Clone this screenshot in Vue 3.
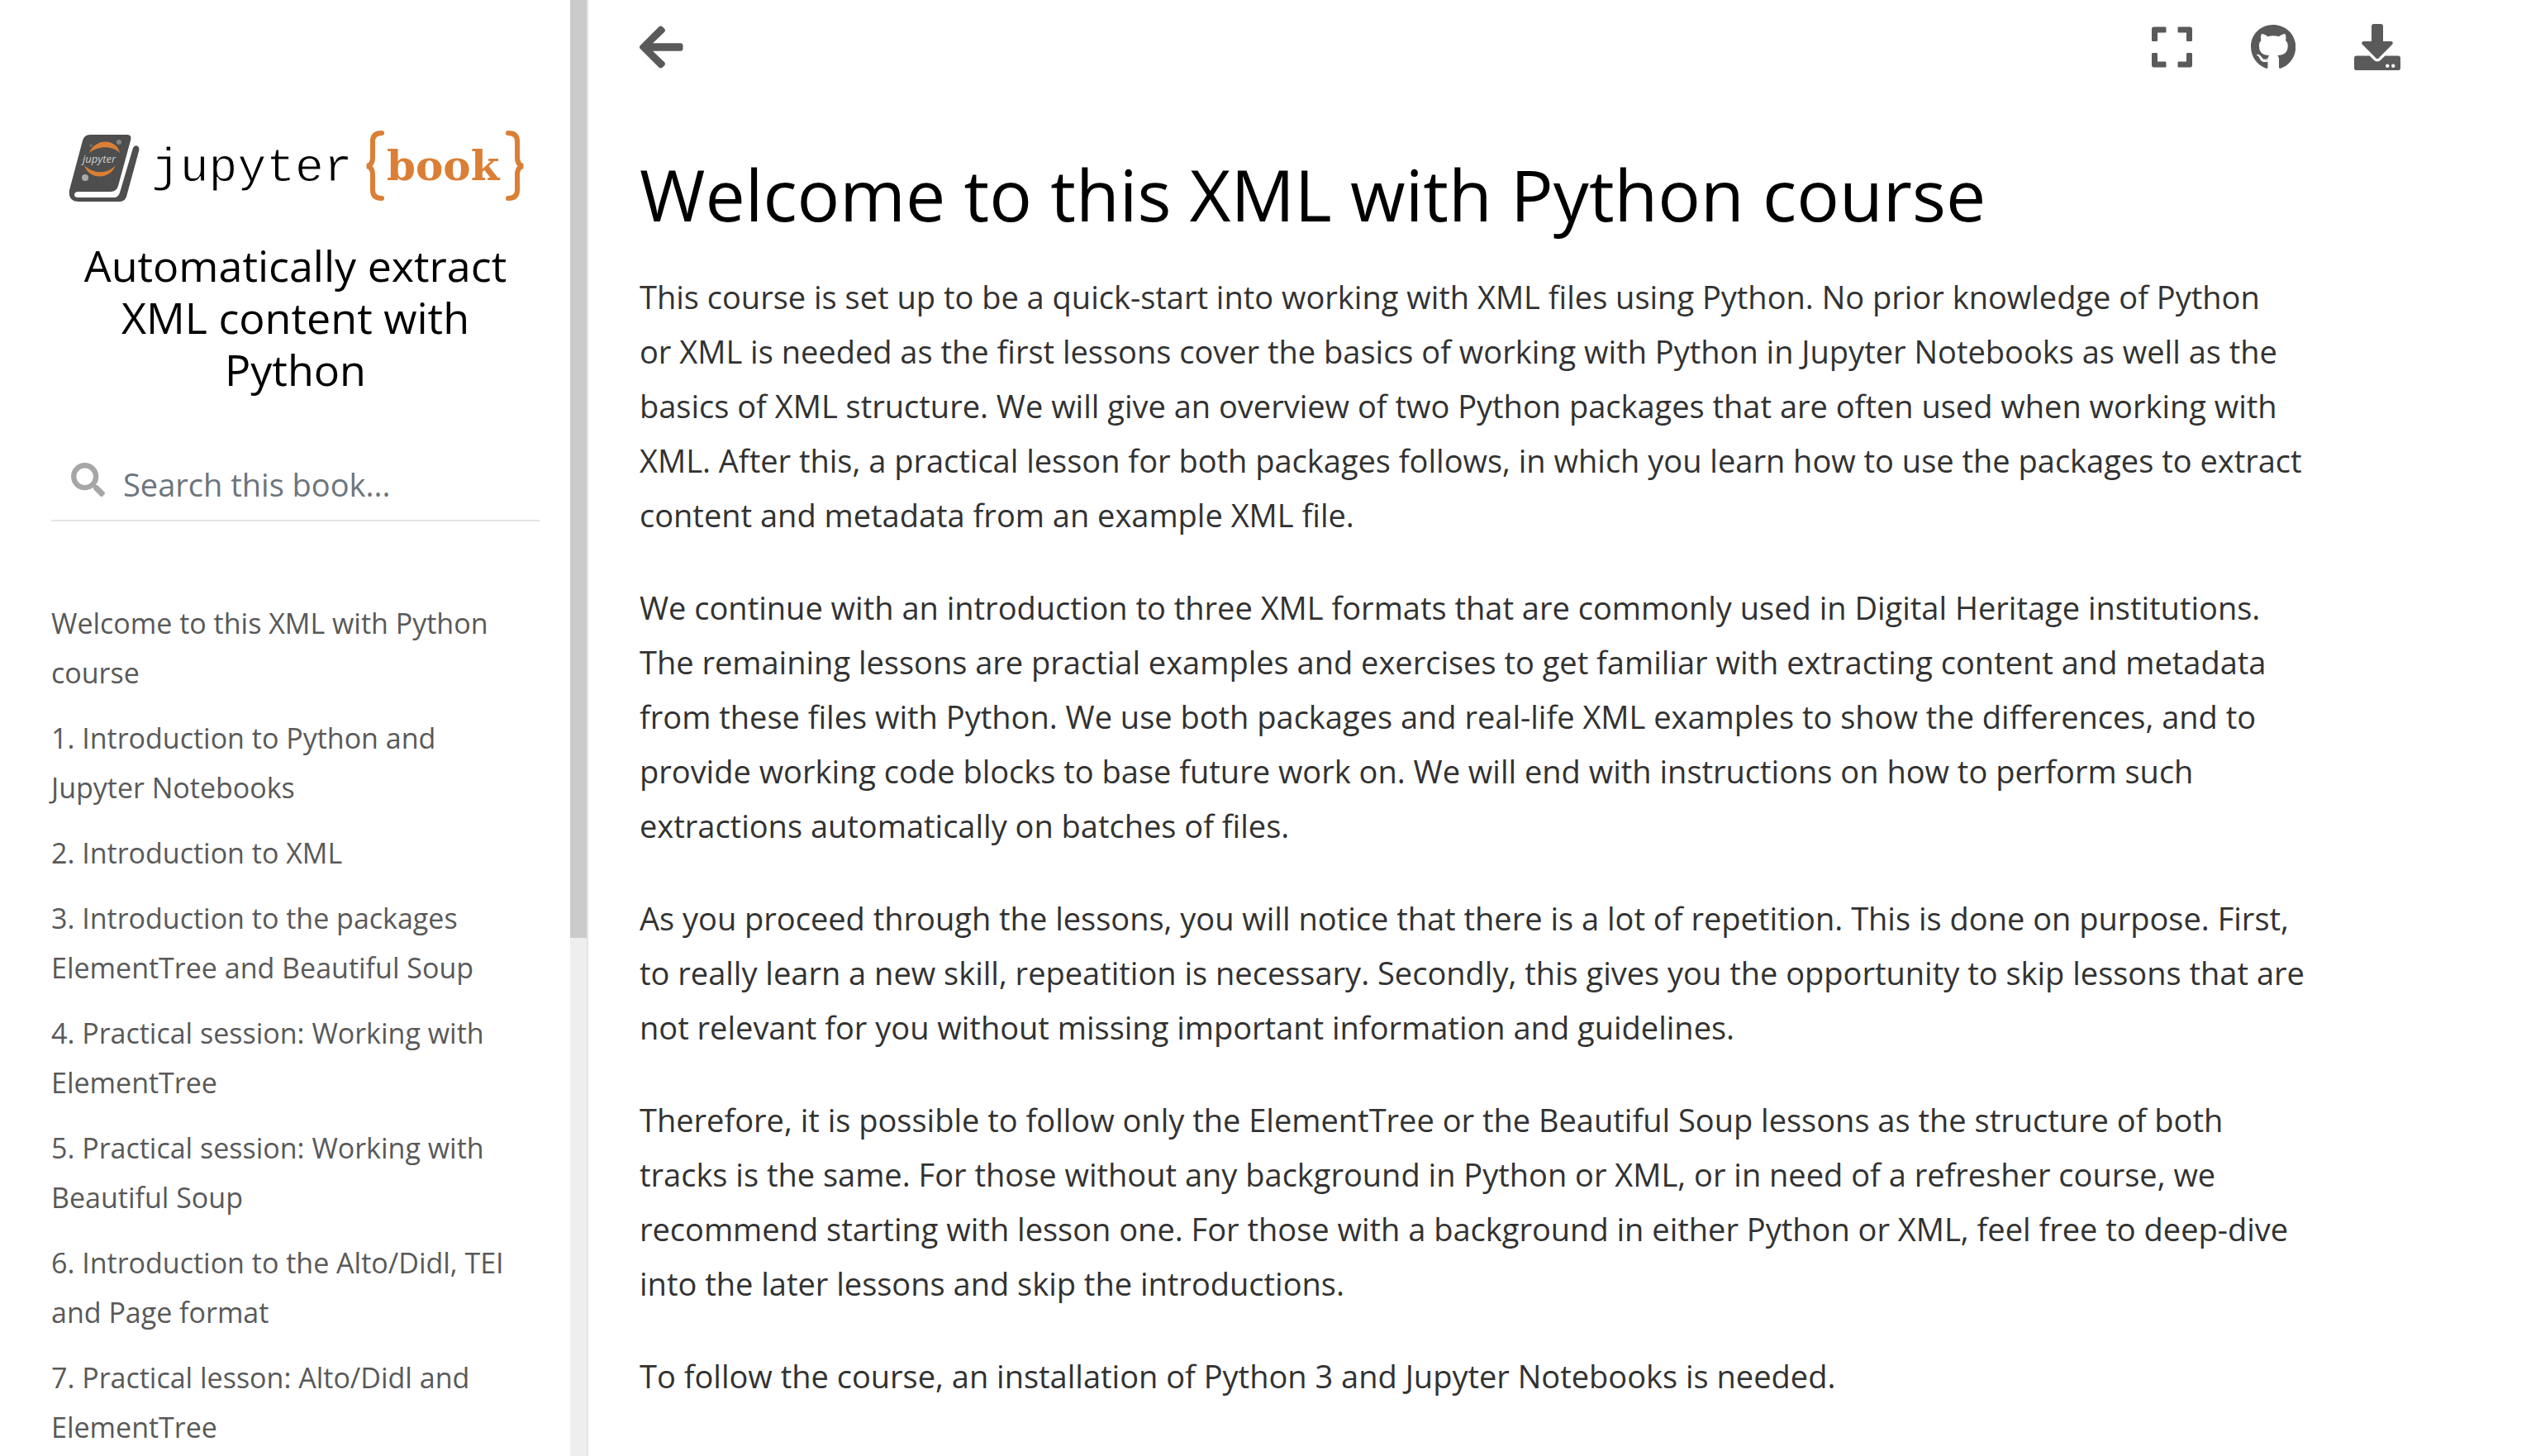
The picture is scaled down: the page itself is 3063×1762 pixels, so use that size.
<template>
  <div class="page">
    <aside class="sidebar">
      <div class="sidebar-content">
        <a class="brand" href="#">
          <svg class="logo" viewBox="0 0 554 90" role="img" aria-label="Jupyter Book">
            <path d="M27 6H72Q78 6 76 13L61 68Q59 75 52 75H13Q8 75 8 79Q8 82 13 82H56Q61 82 63 76L79 22Q81 18 85 20Q87 22 86 26L71 81Q69 87 62 87H14Q0 87 2 73L18 13Q20 6 27 6Z" fill="#4e4e4e" />
            <path d="M26 28C33 10 59 10 63 28C54 19 37 19 26 28Z" fill="#da7f35" />
            <path d="M20 43C26 61 51 61 58 43C48 54 31 54 20 43Z" fill="#da7f35" />
            <circle cx="62" cy="15" r="3" fill="#858585" />
            <circle cx="21" cy="58" r="4" fill="#aaa" />
            <circle cx="28" cy="19" r="2" fill="#6a6a6a" />
            <text class="logo-small" x="18" y="40">jupyter</text>
            <text class="logo-name" x="101" y="62">jupyter</text>
            <g class="brace">
              <path d="M380 4Q369 4 369 14V33Q369 43 362 44Q369 45 369 55V73Q369 83 380 83" />
              <path d="M533 4Q544 4 544 14V33Q544 43 551 44Q544 45 544 55V73Q544 83 533 83" />
            </g>
            <text class="logo-book" x="386" y="61">book</text>
          </svg>
          <h1 class="site-title">Automatically extract XML content with Python</h1>
        </a>

        <form class="search" @submit.prevent>
          <label for="search-input" aria-label="Search this book">
            <svg class="search-icon" viewBox="0 0 512 512"><path :d="icons.search" /></svg>
          </label>
          <input id="search-input" v-model="query" type="search" placeholder="Search this book..." />
        </form>

        <nav>
          <ul class="toc">
            <li v-for="item in toc" :key="item"><a href="#">{{ item }}</a></li>
          </ul>
        </nav>
      </div>
      <div class="scroll-track"><div class="scroll-thumb"></div></div>
    </aside>

    <main class="main">
      <header class="topbar">
        <button type="button" class="back" aria-label="Toggle navigation">
          <svg viewBox="0 0 448 512"><path :d="icons.arrow" /></svg>
        </button>
        <div class="actions">
          <button type="button" aria-label="Fullscreen mode">
            <svg viewBox="0 0 448 512"><path :d="icons.expand" /></svg>
          </button>
          <button type="button" aria-label="Source repository">
            <svg viewBox="0 0 496 512"><path :d="icons.github" /></svg>
          </button>
          <button type="button" aria-label="Download this page">
            <svg viewBox="0 0 512 512"><path :d="icons.download" /></svg>
          </button>
        </div>
      </header>

      <article class="article">
        <h1>Welcome to this XML with Python course</h1>
        <p v-for="(text, i) in paragraphs" :key="i">{{ text }}</p>
      </article>
    </main>
  </div>
</template>

<script setup>
import { ref } from 'vue';

const query = ref('');

const toc = [
  'Welcome to this XML with Python course',
  '1. Introduction to Python and Jupyter\u00a0Notebooks',
  '2. Introduction to XML',
  '3. Introduction to the packages ElementTree and Beautiful Soup',
  '4. Practical session: Working with ElementTree',
  '5. Practical session: Working with Beautiful Soup',
  '6. Introduction to the Alto/Didl, TEI and Page format',
  '7. Practical lesson: Alto/Didl and ElementTree',
];

const paragraphs = [
  'This course is set up to be a quick-start into working with XML files using Python. No prior knowledge of Python or\u00a0XML is needed as the first lessons cover the basics of working with Python in Jupyter Notebooks as well as the basics of XML structure. We will give an overview of two Python packages that are often used when working with XML. After this, a practical lesson for both packages follows, in which you learn how to use the packages to extract content and metadata from an example XML file.',
  'We continue with an introduction to three XML formats that are commonly used in Digital Heritage institutions. The remaining lessons are practial examples and exercises to get familiar with extracting content and metadata from these files with Python. We use both packages and real-life XML examples to show the differences, and to provide working code blocks to base future work on. We will end with instructions on how to perform such extractions automatically on batches of files.',
  'As you proceed through the lessons, you will notice that there is a lot of repetition. This is done on purpose. First, to really learn a new skill, repeatition is necessary. Secondly, this gives you the opportunity to skip lessons that are not relevant for you without missing important information and guidelines.',
  'Therefore, it is possible to follow only the ElementTree or the Beautiful Soup lessons as the structure of both tracks is the same. For those without any background in Python or XML, or in need of a refresher course, we recommend starting with lesson one. For those with a background in either Python or XML, feel free to deep-dive into the later lessons and skip the introductions.',
  'To follow the course, an installation of Python 3 and Jupyter Notebooks is needed.',
];

const icons = {
  search: 'M505 442.7L405.3 343c-4.5-4.5-10.6-7-17-7H372c27.6-35.3 44-79.7 44-128C416 93.1 322.9 0 208 0S0 93.1 0 208s93.1 208 208 208c48.3 0 92.7-16.4 128-44v16.3c0 6.4 2.5 12.5 7 17l99.7 99.7c9.4 9.4 24.6 9.4 33.9 0l28.3-28.3c9.4-9.4 9.4-24.6.1-34zM208 336c-70.7 0-128-57.2-128-128 0-70.7 57.2-128 128-128 70.7 0 128 57.2 128 128 0 70.7-57.2 128-128 128z',
  arrow: 'M257.5 445.1l-22.2 22.2c-9.4 9.4-24.6 9.4-33.9 0L7 273c-9.4-9.4-9.4-24.6 0-33.9L201.4 44.7c9.4-9.4 24.6-9.4 33.9 0l22.2 22.2c9.5 9.5 9.3 25-.4 34.3L136.6 216H424c13.3 0 24 10.7 24 24v32c0 13.3-10.7 24-24 24H136.6l120.5 114.8c9.8 9.3 10 24.8.4 34.3z',
  expand: 'M0 180V56c0-13.3 10.7-24 24-24h124c6.6 0 12 5.4 12 12v40c0 6.6-5.4 12-12 12H64v84c0 6.6-5.4 12-12 12H12c-6.6 0-12-5.4-12-12zM288 44v40c0 6.6 5.4 12 12 12h84v84c0 6.6 5.4 12 12 12h40c6.6 0 12-5.4 12-12V56c0-13.3-10.7-24-24-24H300c-6.6 0-12 5.4-12 12zm148 276h-40c-6.6 0-12 5.4-12 12v84h-84c-6.6 0-12 5.4-12 12v40c0 6.6 5.4 12 12 12h124c13.3 0 24-10.7 24-24V332c0-6.6-5.4-12-12-12zM160 468v-40c0-6.6-5.4-12-12-12H64v-84c0-6.6-5.4-12-12-12H12c-6.6 0-12 5.4-12 12v124c0 13.3 10.7 24 24 24h124c6.6 0 12-5.4 12-12z',
  github: 'M165.9 397.4c0 2-2.3 3.6-5.2 3.6-3.3.3-5.6-1.3-5.6-3.6 0-2 2.3-3.6 5.2-3.6 3-.3 5.6 1.3 5.6 3.6zm-31.1-4.5c-.7 2 1.3 4.3 4.3 4.9 2.6 1 5.6 0 6.2-2s-1.3-4.3-4.3-5.2c-2.6-.7-5.5.3-6.2 2.3zm44.2-1.7c-2.9.7-4.9 2.6-4.6 4.9.3 2 2.9 3.3 5.9 2.6 2.9-.7 4.9-2.6 4.6-4.6-.3-1.9-3-3.2-5.9-2.9zM244.8 8C106.1 8 0 113.3 0 252c0 110.9 69.8 205.8 169.5 239.2 12.8 2.3 17.3-5.6 17.3-12.1 0-6.2-.3-40.4-.3-61.4 0 0-70 15-84.7-29.8 0 0-11.4-29.1-27.8-36.6 0 0-22.9-15.7 1.6-15.4 0 0 24.9 2 38.6 25.8 21.9 38.6 58.6 27.5 72.9 20.9 2.3-16 8.8-27.1 16-33.7-55.9-6.2-112.3-14.3-112.3-110.5 0-27.5 7.6-41.3 23.6-58.9-2.6-6.5-11.1-33.3 2.6-67.9 20.9-6.5 69 27 69 27 20-5.6 41.5-8.5 62.8-8.5s42.8 2.9 62.8 8.5c0 0 48.1-33.6 69-27 13.7 34.7 5.2 61.4 2.6 67.9 16 17.7 25.8 31.5 25.8 58.9 0 96.5-58.9 104.2-114.8 110.5 9.2 7.9 17 22.9 17 46.4 0 33.7-.3 75.4-.3 83.6 0 6.5 4.6 14.4 17.3 12.1C428.2 457.8 496 362.9 496 252 496 113.3 383.5 8 244.8 8z',
  download: 'M216 0h80c13.3 0 24 10.7 24 24v168h87.7c17.8 0 26.7 21.5 14.1 34.1L269.7 378.3c-7.5 7.5-19.8 7.5-27.3 0L90.1 226.1c-12.6-12.6-3.7-34.1 14.1-34.1H192V24c0-13.3 10.7-24 24-24zm296 376v112c0 13.3-10.7 24-24 24H24c-13.3 0-24-10.7-24-24V376c0-13.3 10.7-24 24-24h146.7l49 49c20.1 20.1 52.5 20.1 72.6 0l49-49H488c13.3 0 24 10.7 24 24zm-124 88c0-11-9-20-20-20s-20 9-20 20 9 20 20 20 20-9 20-20zm64 0c0-11-9-20-20-20s-20 9-20 20 9 20 20 20 20-9 20-20z',
};
</script>

<style>
body {
  margin: 0;
  background: #fff;
}
</style>

<style scoped>
.page {
  display: flex;
  align-items: flex-start;
  font-family: "Segoe UI", "Open Sans", "Noto Sans", sans-serif;
  color: #323232;
}
.sidebar {
  position: sticky;
  top: 0;
  display: flex;
  flex: none;
  box-sizing: border-box;
  width: 712px;
  height: 100vh;
  overflow: hidden;
  border-right: 2px solid #e4e4e4;
}
.sidebar-content {
  flex: 1;
  min-width: 0;
  padding: 157px 37px 0 62px;
}
.scroll-track {
  width: 20px;
  background: #eee;
}
.scroll-thumb {
  height: 64.4%;
  background: #cbcbcb;
}
.brand {
  display: block;
  color: #000;
  text-decoration: none;
}
.logo {
  display: block;
  width: 554px;
  max-width: 100%;
  margin: 0 auto 42px 20px;
}
.logo-small {
  font: italic 13px "Open Sans", sans-serif;
  fill: #d0d0d0;
}
/* white outline thins the letters down to a light weight */
.logo-name {
  font-family: "Courier New", "Liberation Mono", monospace;
  font-size: 58px;
  stroke: #fff;
  stroke-width: 1;
}
.logo-book {
  font-family: "DejaVu Serif", serif;
  font-size: 50px;
  font-weight: 700;
  fill: #da7f35;
}
.brace {
  fill: none;
  stroke: #da7f35;
  stroke-width: 6;
  stroke-linecap: round;
}
.site-title {
  margin: 0;
  font-size: 52px;
  font-weight: 400;
  line-height: 63px;
  text-align: center;
}
.search {
  display: flex;
  align-items: center;
  margin: 64px 0 93px;
  padding-left: 24px;
  height: 87px;
  border-bottom: 2px solid #e5e5e5;
}
.search-icon {
  display: block;
  width: 41px;
  height: 41px;
  margin-bottom: 10px;
  fill: #a6a6a6;
}
.search input {
  flex: 1;
  min-width: 0;
  margin-left: 22px;
  padding: 0;
  border: 0;
  outline: 0;
  background: none;
  font: inherit;
  font-size: 38px;
  color: #495057;
}
.search input::placeholder {
  color: #6c757d;
  opacity: 1;
}
.toc {
  display: flex;
  flex-direction: column;
  gap: 19px;
  margin: 0;
  padding: 0;
  list-style: none;
  font-size: 34px;
  line-height: 60px;
}
.toc a {
  display: block;
  color: #595959;
  text-decoration: none;
}
.main {
  flex: 1;
  min-width: 0;
  padding-left: 62px;
}
.topbar {
  display: flex;
  align-items: center;
  justify-content: space-between;
  height: 114px;
  padding-right: 158px;
}
.topbar button {
  display: block;
  padding: 0;
  border: 0;
  background: none;
  cursor: pointer;
}
.topbar svg {
  display: block;
  height: 56px;
  fill: #5a5a5a;
}
.topbar .back svg {
  height: 60px;
}
.actions {
  display: flex;
  gap: 71px;
}
.article {
  padding-right: 11%;
}
.article h1 {
  margin: 67px 0 37px;
  font-size: 86px;
  font-weight: 400;
  line-height: 108px;
  color: #000;
}
.article p {
  max-width: 2026px;
  margin: 0 0 46px;
  font-size: 38px;
  line-height: 66px;
}
</style>
